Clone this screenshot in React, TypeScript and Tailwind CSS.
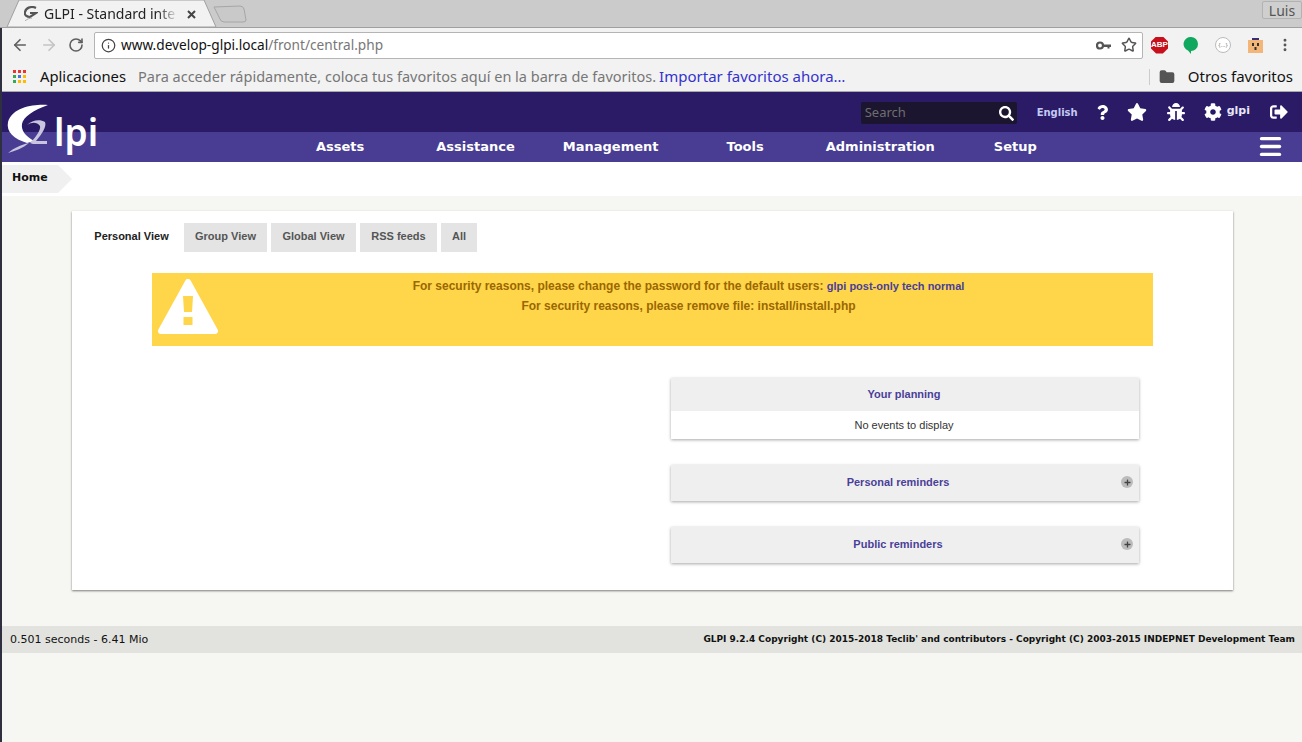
import React from "react";
import { ArrowLeft, ArrowRight, RotateCw, Info, Star, MoreVertical, Folder, Menu } from "lucide-react";
import { FaSearch, FaQuestion, FaStar, FaBug, FaCog, FaSignOutAlt, FaPlus } from "react-icons/fa";

const ui = "font-['Noto_Sans','Open_Sans',sans-serif]";
const dj = "font-['DejaVu_Sans',sans-serif]";
const li = "font-['Liberation_Sans',Arial,sans-serif]";

function Tab({ label, w, active }: { label: string; w: string; active?: boolean }) {
  return (
    <div className={`${w} h-[29px] flex items-center justify-center pb-[2px] text-[11px] font-bold ${active ? "text-[#222]" : "bg-[#e4e4e4] text-[#555]"}`}>{label}</div>
  );
}

function Panel({ title }: { title: string }) {
  return (
    <div className="h-[36px] w-[468px] bg-[#f0eff0] shadow-[0_1px_3px_rgba(0,0,0,0.35)] flex items-center pb-[2px] relative">
      <div className="w-[454px] text-center text-[11px] font-bold text-[#4a3f98]">{title}</div>
      <div className="absolute right-[6px] top-[11px] w-[12px] h-[12px] rounded-full bg-[#bbb] flex items-center justify-center text-[#444]">
        <FaPlus size={7} />
      </div>
    </div>
  );
}

export default function App() {
  return (
    <div className={`relative w-[1302px] h-[742px] overflow-hidden bg-[#f6f7f2] ${li}`}>
      {/* Browser chrome */}
      <div className={`h-[92px] bg-[#f2f2f2] border-b border-[#a8a8a8] ${ui}`}>
        <div className="relative h-[28px] bg-[#cbcbcb] border-b border-[#a0a0a0] flex items-end">
          <svg className="absolute left-[2px] top-0" width="250" height="28" viewBox="0 0 250 28">
            <path d="M5 27 L17 0 L202 0 L214 27 Z" fill="#f2f2f2" stroke="#a0a0a0" />
            <path d="M212 7 L238 6 Q241 6 242 9 L244 20 Q244 22 241 22 L222 22 Q219 22 218 19 Z" fill="#c9c9c9" stroke="#a6a6a6" />
          </svg>
          <svg className="absolute left-[24px] top-[6px]" width="14" height="15" viewBox="0 0 14 15">
            <path d="M12 2 C 8 0 2 1 1 6 C 0 9 3 11 6 11 L12 7 L6 7" fill="none" stroke="#555" strokeWidth="2.2" />
            <path d="M1 15 C 3 13 6 12 8 12" fill="none" stroke="#aaa" strokeWidth="1" />
          </svg>
          <div className="absolute left-[44px] top-[5px] w-[134px] h-[18px] overflow-hidden whitespace-nowrap text-[14px] leading-[18px] text-[#222] [mask-image:linear-gradient(to_right,black_85%,transparent)]">GLPI - Standard inte</div>
          <svg className="absolute left-[187px] top-[10px]" width="9" height="9" viewBox="0 0 9 9"><path d="M1 1 L8 8 M8 1 L1 8" stroke="#444" strokeWidth="2" /></svg>
          <div className="absolute right-[0px] top-[1px] h-[18px] w-[40px] border border-[#b2b2b2] bg-[#cfcfcf] rounded-[2px] flex items-center justify-center text-[14px] text-[#555]">Luis</div>
        </div>
        <div className="h-[34px] flex items-center pl-[11px]">
          <ArrowLeft size={18} className="text-[#5f5f5f]" strokeWidth={2.2} />
          <ArrowRight size={18} className="ml-[11px] text-[#c4c4c4]" strokeWidth={2.2} />
          <RotateCw size={16} className="ml-[10px] text-[#5f5f5f]" strokeWidth={2.4} />
          <div className="ml-[10px] w-[1049px] h-[27px] bg-white border border-[#b4b4b4] rounded-[2px] flex items-center pl-[6px] pr-[5px]">
            <Info size={15} className="text-[#444]" strokeWidth={2} />
            <div className="ml-[5px] text-[13.65px] text-[#777] whitespace-nowrap"><span className="text-[#111]">www.develop-glpi.local</span>/front/central.php</div>
            <div className="flex-1" />
            <svg width="15" height="9" viewBox="0 0 15 9"><circle cx="4" cy="4.5" r="3" fill="none" stroke="#555" strokeWidth="2.2" /><path d="M7 3.5 H15 V6 H13.5 V7.5 H11.5 V6 H7Z" fill="#555" /></svg>
            <Star size={16} className="ml-[10px] text-[#555]" strokeWidth={2.2} />
          </div>
          <div className="ml-[8px] w-[17px] h-[17px] [clip-path:polygon(30%_0,70%_0,100%_30%,100%_70%,70%_100%,30%_100%,0_70%,0_30%)] bg-[#c8101c] flex items-center justify-center text-[8px] font-bold text-white font-['Liberation_Sans',sans-serif]">ABP</div>
          <svg className="ml-[15px]" width="16" height="19" viewBox="0 0 16 19"><path d="M8 1 A7 7 0 0 1 8 15 L8 18 L5 14.5 A7 7 0 0 1 8 1Z" fill="#0fa85e" /></svg>
          <div className="ml-[16px] w-[16px] h-[16px] rounded-full border-[1.5px] border-[#bbb] bg-white flex items-center justify-center text-[6px] text-[#888]">{"{...}"}</div>
          <svg className="ml-[17px]" width="15" height="15" viewBox="0 0 15 15">
            <rect y="2" width="15" height="13" fill="#f2b679" />
            <rect x="4" y="0" width="7" height="2" fill="#3a2f70" />
            <rect x="4" y="5" width="2" height="3" fill="#333" />
            <rect x="9" y="5" width="2" height="3" fill="#333" />
            <rect x="6.5" y="9" width="2" height="3" fill="#333" />
          </svg>
          <MoreVertical size={16} className="ml-[14px] text-[#555]" strokeWidth={2.4} />
        </div>
        <div className="h-[29px] flex items-center pl-[13px] whitespace-nowrap">
          <div className="grid grid-cols-3 gap-[2px] w-[13px] h-[13px]">
            {["#e33","#e33","#e33","#3a5","#47d","#fb0","#3a5","#fb0","#fb0"].map((c, i) => (
              <div key={i} className="w-[3px] h-[3px]" style={{ background: c }} />
            ))}
          </div>
          <span className="ml-[14px] text-[14.8px] text-[#111]">Aplicaciones</span>
          <span className="ml-[12px] text-[14.5px] text-[#777]">Para acceder rápidamente, coloca tus favoritos aquí en la barra de favoritos.</span>
          <span className="ml-[3px] text-[15px] text-[#3333cc]">Importar favoritos ahora…</span>
          <div className="flex-1" />
          <div className="w-px h-[16px] bg-[#ccc]" />
          <Folder size={16} className="ml-[9px] text-[#555] fill-[#555]" />
          <span className="ml-[13px] mr-[9px] text-[15px] text-[#111]">Otros favoritos</span>
        </div>
      </div>

      {/* Desktop strip */}
      <div className="absolute left-0 top-[28px] bottom-0 w-[2px] bg-[#2e3040]" />

      <div className="ml-[2px]">
        {/* GLPI header */}
        <div className={`relative h-[40px] bg-[#2b1a66] flex items-center justify-end text-white ${dj}`}>
          <div className="mr-[20px] mt-[2px] w-[156px] h-[22px] bg-[#1b1530] rounded-[2px] flex items-center pl-[4px] pr-[3px]">
            <span className={`text-[13px] text-[#6e6e6e] ${ui}`}>Search</span>
            <div className="flex-1" />
            <FaSearch size={15} />
          </div>
          <span className="text-[10px] font-bold text-[#c3cbf5] mr-[17px] mt-[1px]">English</span>
          <FaQuestion size={15} className="mr-[17px]" />
          <FaStar size={20} className="mr-[20px]" />
          <FaBug size={18} className="mr-[19px]" />
          <FaCog size={18} className="mr-[5px]" />
          <span className="text-[11px] font-bold text-[#e8e6f5] mb-[2px] mr-[20px]">glpi</span>
          <FaSignOutAlt size={18} className="mr-[14px]" />
        </div>
        {/* Nav */}
        <div className={`relative h-[30px] bg-[#483d92] text-white text-[13px] font-bold ${dj} flex items-center`}>
          <span className="ml-[314px]">Assets</span>
          <span className="ml-[72px]">Assistance</span>
          <span className="ml-[48px]">Management</span>
          <span className="ml-[68px]">Tools</span>
          <span className="ml-[62px]">Administration</span>
          <span className="ml-[59px]">Setup</span>
          <Menu size={27} strokeWidth={3} className="absolute right-[18px] top-[1px]" />
        </div>
        {/* Breadcrumb */}
        <div className={`h-[34px] bg-white pt-[3px] ${dj}`}>
          <div className="relative w-[56px] h-[28px] bg-[#f0f0f0] flex items-center pl-[10px] pb-[2px] text-[11px] font-bold text-[#111]">
            Home
            <div className="absolute left-[56px] top-0 border-y-[14px] border-y-transparent border-l-[14px] border-l-[#f0f0f0]" />
          </div>
        </div>
        {/* Main card */}
        <div className="mt-[15px] ml-[70px] w-[1161px] h-[379px] bg-white shadow-[0_1px_2px_rgba(0,0,0,0.5)] pt-[12px]">
          <div className="flex gap-[4px] ml-[11px]">
            <Tab label="Personal View" w="w-[97px]" active />
            <Tab label="Group View" w="w-[83px]" />
            <Tab label="Global View" w="w-[85px]" />
            <Tab label="RSS feeds" w="w-[77px]" />
            <Tab label="All" w="w-[36px]" />
          </div>
          <div className="relative mt-[21px] ml-[80px] w-[1001px] h-[73px] bg-[#ffd54a] pt-[3px] text-center text-[12px] font-bold text-[#9a6700] leading-[20px]">
            <svg className="absolute left-[6px] top-[6px]" width="60" height="55" viewBox="0 0 60 55">
              <path fill="#fff" stroke="#fff" strokeWidth="6" strokeLinejoin="round" d="M30 3 L57 52 L3 52 Z" />
              <path d="M25 17 H35 L34 33 H26 Z" fill="#ffd54a" />
              <rect x="25.5" y="38" width="9" height="8" fill="#ffd54a" />
            </svg>
            <div className="pl-[127px] w-[946px]">
              <div>For security reasons, please change the password for the default users: <span className="text-[11px] text-[#4a3f98]">glpi post-only tech normal</span></div>
              <div>For security reasons, please remove file: install/install.php</div>
            </div>
          </div>
          <div className="ml-[599px] mt-[32px] w-[468px]">
            <div className="w-[468px] bg-white shadow-[0_1px_3px_rgba(0,0,0,0.35)]">
              <div className="h-[33px] bg-[#f0eff0] flex items-center justify-center pr-[2px] text-[11px] font-bold text-[#4a3f98]">Your planning</div>
              <div className="h-[28px] flex items-center justify-center pr-[2px] text-[11px] text-[#333]">No events to display</div>
            </div>
            <div className="mt-[26px]"><Panel title="Personal reminders" /></div>
            <div className="mt-[26px]"><Panel title="Public reminders" /></div>
          </div>
        </div>
        {/* Footer */}
        <div className={`mt-[36px] h-[27px] bg-[#e2e3de] flex items-center justify-between pl-[8px] pr-[7px] pt-[1px] text-[#111] ${dj}`}>
          <span className="text-[11px]">0.501 seconds - 6.41 Mio</span>
          <span className="text-[9px] font-bold">GLPI 9.2.4 Copyright (C) 2015-2018 Teclib' and contributors - Copyright (C) 2003-2015 INDEPNET Development Team</span>
        </div>
      </div>

      {/* Logo overlaps the two header bars */}
      <div className="absolute left-0 top-[100px] w-[100px] h-[60px]">
        <svg width="100" height="60" viewBox="0 100 100 60">
          <path d="M48 105 C 36 104 13 106 8 122 C 6 132 14 139 27 143 L 34 141 C 25 136 21 130 22 124 C 23 117 34 110 48 105 Z" fill="#fff" />
          <path d="M27 125 C 32 120 40 119 45 122 C 47 126 42 134 36 141 L 47 141 L 47 144 L 33 144 L 30 143 C 36 137 41 130 40 126 C 37 122 32 122 27 125 Z" fill="#c9c5de" />
          <path d="M8 153 C 14 148 20 145 29 143 C 23 148 15 151 8 153 Z" fill="#c9c5de" />
        </svg>
        <span className="absolute left-[54px] top-[11px] text-[37px] leading-[42px] font-['Noto_Sans',sans-serif] text-white font-semibold">lpi</span>
      </div>
    </div>
  );
}
